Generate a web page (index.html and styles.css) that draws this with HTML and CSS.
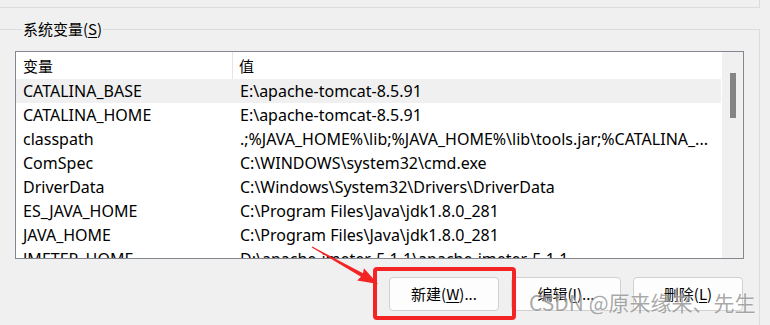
FILE: index.html
```html
<!DOCTYPE html>
<html lang="zh-CN">
<head>
    <meta charset="UTF-8">
    <title>系统变量</title>
    <link rel="stylesheet" href="styles.css">
</head>
<body>
<div class="prev-group"></div>
<fieldset class="group">
    <legend>系统变量(<u>S</u>)</legend>
    <div class="list">
        <div class="rows">
            <div class="head">
                <div class="c1">变量</div>
                <div class="c2">值</div>
            </div>
            <div class="row sel"><div class="c1">CATALINA_BASE</div><div class="c2">E:\apache-tomcat-8.5.91</div></div>
            <div class="row"><div class="c1">CATALINA_HOME</div><div class="c2">E:\apache-tomcat-8.5.91</div></div>
            <div class="row"><div class="c1">classpath</div><div class="c2">.;%JAVA_HOME%\lib;%JAVA_HOME%\lib\tools.jar;%CATALINA_...</div></div>
            <div class="row"><div class="c1">ComSpec</div><div class="c2">C:\WINDOWS\system32\cmd.exe</div></div>
            <div class="row"><div class="c1">DriverData</div><div class="c2">C:\Windows\System32\Drivers\DriverData</div></div>
            <div class="row"><div class="c1">ES_JAVA_HOME</div><div class="c2">C:\Program Files\Java\jdk1.8.0_281</div></div>
            <div class="row"><div class="c1">JAVA_HOME</div><div class="c2">C:\Program Files\Java\jdk1.8.0_281</div></div>
            <div class="row"><div class="c1">JMETER_HOME</div><div class="c2">D:\apache-jmeter-5.1.1\apache-jmeter-5.1.1</div></div>
        </div>
        <div class="scroll"><div class="thumb"></div></div>
    </div>
    <div class="buttons">
        <div class="btn mark">新建(<u>W</u>)...<span class="red-box"></span></div>
        <div class="btn">编辑(<u>I</u>)...</div>
        <div class="btn">删除(<u>L</u>)</div>
        <span class="watermark">CSDN @原来缘来、先生</span>
    </div>
</fieldset>
<svg class="arrow" width="770" height="325" viewBox="0 0 770 325">
    <polygon points="312.2,246.6 363,273.2 363.9,268.2 378,284 357.1,280.4 361,276.8 311.8,247.4" fill="#f42424"/>
</svg>
</body>
</html>
```

FILE: styles.css
```css
* {
    margin: 0;
    padding: 0;
    box-sizing: border-box;
}

body {
    position: relative;
    width: 770px;
    height: 325px;
    overflow: hidden;
    background-color: #f0f0f0;
    color: #000;
    font-family: "Noto Sans", "Noto Sans CJK SC", sans-serif;
    font-size: 16px;
}

u {
    text-underline-offset: 2px;
}

.prev-group {
    width: 760px;
    height: 8px;
    border-right: 1px solid #dcdcdc;
    border-bottom: 1px solid #dcdcdc;
}

.group {
    width: 760px;
    height: 306px;
    margin-top: 11px;
    padding: 12px 15px 0 15px;
    border: 1px solid #dcdcdc;
    border-left: none;
    border-bottom: none;
}

.group legend {
    margin-left: 7px;
    padding: 0 1px;
    line-height: 20px;
    font-size: 15px;
    font-family: "Noto Sans CJK SC", sans-serif;
}

.list {
    display: flex;
    height: 208px;
    border: 1px solid #828790;
    background-color: #fff;
    overflow: hidden;
}

.rows {
    flex: 1;
    overflow: hidden;
}

.head,
.row {
    display: flex;
    white-space: nowrap;
}

.head {
    height: 27px;
    line-height: 27px;
    font-size: 15px;
    font-family: "Noto Sans CJK SC", sans-serif;
}

.row {
    height: 24px;
    line-height: 25px;
}

.row.sel {
    background-color: #f0f0f0;
}

.c1 {
    width: 217px;
    padding-left: 7px;
    flex-shrink: 0;
}

.head .c1 {
    border-right: 1px solid #e5e5e5;
}

.c2 {
    flex: 1;
    padding-left: 7px;
    overflow: hidden;
}

.head .c2 {
    padding-left: 6px;
}

.scroll {
    width: 22px;
    padding: 21px 0 0 8px;
    background-color: #f0f0f0;
    border-left: 1px solid #fff;
}

.thumb {
    width: 6px;
    height: 45px;
    background-color: #858585;
}

.buttons {
    position: relative;
    display: flex;
    justify-content: flex-end;
    gap: 12px;
    margin-top: 18px;
    padding-right: 1px;
}

.btn {
    width: 110px;
    height: 34px;
    line-height: 32px;
    text-align: center;
    background-color: #fdfdfd;
    border: 1px solid #d0d0d0;
    border-radius: 4px;
    font-size: 15px;
    font-family: "Noto Sans CJK SC", sans-serif;
}

.mark {
    position: relative;
}

.red-box {
    position: absolute;
    top: -11px;
    left: -17px;
    right: -18px;
    bottom: -10px;
    border: 4px solid #f42424;
    border-radius: 4px;
}

.watermark {
    position: absolute;
    left: 514px;
    top: 11px;
    font-family: "Noto Sans CJK SC", sans-serif;
    font-size: 21px;
    line-height: 28px;
    color: rgba(110, 110, 110, 0.6);
    text-shadow: 0 0 2px rgba(255, 255, 255, 0.8);
    white-space: nowrap;
}

.arrow {
    position: absolute;
    top: 0;
    left: 0;
    pointer-events: none;
}
```
